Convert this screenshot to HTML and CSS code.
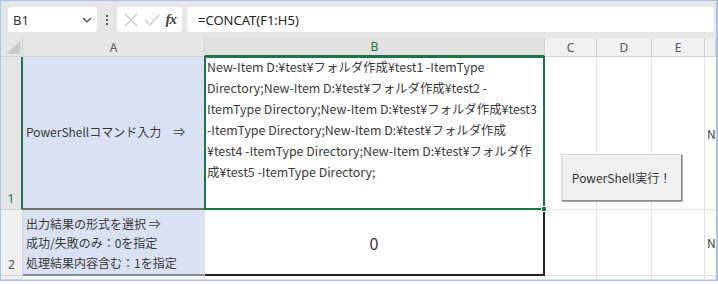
FILE: index.html
```html
<!DOCTYPE html>
<html lang="ja">
<head>
    <meta charset="UTF-8">
    <title>Excel - PowerShell</title>
    <link rel="stylesheet" href="styles.css">
</head>
<body>
    <div class="app">
        <!-- 数式バー -->
        <div class="formula-bar">
            <div class="name-box">
                <span>B1</span>
                <svg class="chevron" width="10" height="6" viewBox="0 0 10 6"><path d="M1 1l4 4 4-4" fill="none" stroke="#444" stroke-width="1.2"/></svg>
            </div>
            <div class="dots"><i></i><i></i><i></i></div>
            <div class="fx-box">
                <svg width="14" height="14" viewBox="0 0 14 14"><path d="M1 1l12 12M13 1L1 13" stroke="#c4c4c4" stroke-width="1.2"/></svg>
                <svg width="16" height="14" viewBox="0 0 16 14"><path d="M1 7l5 5L15 2" fill="none" stroke="#c4c4c4" stroke-width="1.2"/></svg>
                <span class="fx">fx</span>
            </div>
            <div class="formula">=CONCAT(F1:H5)</div>
        </div>

        <!-- シート -->
        <div class="sheet">
            <div class="hdr corner"><span class="tri"></span></div>
            <div class="hdr col">A</div>
            <div class="hdr col active">B</div>
            <div class="hdr col light">C</div>
            <div class="hdr col light">D</div>
            <div class="hdr col light">E</div>
            <div class="hdr col light"></div>

            <div class="hdr row active">1</div>
            <div class="cell label label-1">PowerShellコマンド入力　⇒</div>
            <div class="cell cmd">
                <div class="sel"><span class="handle"></span></div>
                <span>New-Item D:¥test¥フォルダ作成¥test1 -ItemType</span>
                <span>Directory;New-Item D:¥test¥フォルダ作成¥test2 -</span>
                <span>ItemType Directory;New-Item D:¥test¥フォルダ作成¥test3</span>
                <span>-ItemType Directory;New-Item D:¥test¥フォルダ作成</span>
                <span>¥test4 -ItemType Directory;New-Item D:¥test¥フォルダ作</span>
                <span>成¥test5 -ItemType Directory;</span>
            </div>
            <div class="cell"></div>
            <div class="cell"></div>
            <div class="cell"></div>
            <div class="cell over">N</div>

            <div class="hdr row">2</div>
            <div class="cell label label-2">
                <span>出力結果の形式を選択 ⇒</span>
                <span>成功/失敗のみ：0を指定</span>
                <span>処理結果内容含む：1を指定</span>
            </div>
            <div class="cell result">0</div>
            <div class="cell"></div>
            <div class="cell"></div>
            <div class="cell"></div>
            <div class="cell over">N</div>

            <div class="hdr row"></div>
            <div class="cell"></div>
            <div class="cell"></div>
            <div class="cell"></div>
            <div class="cell"></div>
            <div class="cell"></div>
            <div class="cell"></div>

            <button class="run-btn">PowerShell実行！</button>
        </div>
    </div>
</body>
</html>
```

FILE: styles.css
```css
* {
    margin: 0;
    padding: 0;
    box-sizing: border-box;
}

body {
    font-family: "Noto Sans", "Noto Sans CJK JP", sans-serif;
    background: #fff;
    color: #333;
}

.app {
    width: 718px;
    height: 281px;
    border: 1px solid #a9c4e4;
    border-right-width: 2px;
    background: #e6e6e6;
    display: flex;
    flex-direction: column;
    overflow: hidden;
}

/* 数式バー */
.formula-bar {
    height: 37px;
    flex: none;
    display: flex;
    align-items: flex-start;
    padding: 6px 2px 0 7px;
}

.name-box,
.fx-box,
.formula {
    height: 25px;
    background: #fff;
    border-radius: 3px;
    display: flex;
    align-items: center;
}

.name-box {
    width: 89px;
    padding: 0 5px 0 5px;
    justify-content: space-between;
    font-size: 13px;
    color: #333;
}

.dots {
    width: 20px;
    height: 25px;
    display: flex;
    flex-direction: column;
    align-items: center;
    justify-content: center;
    gap: 2px;
}

.dots i {
    width: 2px;
    height: 2px;
    background: #555;
}

.fx-box {
    width: 65px;
    padding: 0 6px 0 7px;
    justify-content: space-between;
}

.fx {
    font-family: "Liberation Serif", serif;
    font-style: italic;
    font-weight: bold;
    font-size: 15px;
    color: #444;
    letter-spacing: -1px;
}

.formula {
    flex: 1;
    margin-left: 5px;
    padding-left: 11px;
    font-size: 13px;
    color: #222;
}

/* シート */
.sheet {
    flex: 1;
    position: relative;
    display: grid;
    grid-template-columns: 22px 182px 340px 52px 55px 53px 1fr;
    grid-template-rows: 19px 153px 66px 1fr;
    background: #fff;
    font-family: "Noto Sans CJK JP", sans-serif;
    font-size: 12px;
    color: #3a3a3a;
}

.hdr {
    background: #e6e6e6;
    border-right: 1px solid #d2d2d2;
    border-bottom: 1px solid #d2d2d2;
    font-family: "Noto Sans", sans-serif;
    font-size: 12px;
    color: #555;
    display: flex;
    justify-content: center;
    align-items: center;
}

.hdr.light {
    background: #f1f1f1;
}

.hdr.col.active {
    color: #217346;
    border-bottom: 2px solid #217346;
    background: #e1e1e1;
}

.corner {
    justify-content: flex-end;
    align-items: flex-end;
    padding: 0 2px 2px 0;
}

.tri {
    width: 0;
    height: 0;
    border-left: 14px solid transparent;
    border-bottom: 13px solid #c8c8c8;
}

.hdr.row {
    background: #efefef;
    align-items: flex-end;
    line-height: 20px;
}

.hdr.row.active {
    background: #e6e6e6;
    color: #217346;
    border-right: 2px solid #217346;
}

.cell {
    border-right: 1px solid #e1e1e1;
    border-bottom: 1px solid #e1e1e1;
    overflow: hidden;
}

.label {
    background: #d9e1f2;
    padding-left: 3px;
    border-bottom: 2px solid #707070;
}

.label-1 {
    display: flex;
    align-items: center;
    padding-bottom: 2px;
}

.label-2 {
    display: flex;
    flex-direction: column;
    justify-content: flex-end;
    line-height: 19.5px;
    padding-bottom: 2px;
    border-bottom-color: #8c8c8c;
}

.cmd {
    position: relative;
    overflow: visible;
    display: flex;
    flex-direction: column;
    padding-left: 2px;
    font-size: 12.4px;
    line-height: 21px;
    white-space: nowrap;
}

.sel {
    position: absolute;
    top: -1px;
    left: -1px;
    right: -1px;
    bottom: -1px;
    border: 2px solid #217346;
    pointer-events: none;
}

.handle {
    position: absolute;
    right: -4px;
    bottom: -4px;
    width: 6px;
    height: 6px;
    background: #217346;
    border: 1px solid #fff;
}

.result {
    display: flex;
    justify-content: center;
    align-items: center;
    font-size: 16px;
    border-right: 2px solid #222;
    border-bottom: 2px solid #222;
    padding-top: 1px;
}

.over {
    display: flex;
    align-items: center;
    padding-left: 2px;
    border-right: none;
}

.run-btn {
    position: absolute;
    left: 560px;
    top: 116px;
    width: 121px;
    height: 47px;
    background: #f0f0f0;
    border: 1px solid #d6d6d6;
    border-right-color: #8c8c8c;
    border-bottom-color: #8c8c8c;
    box-shadow: 1px 1px 0 #a8a8a8;
    font-family: "Noto Sans CJK JP", sans-serif;
    font-size: 12px;
    color: #333;
}
```
